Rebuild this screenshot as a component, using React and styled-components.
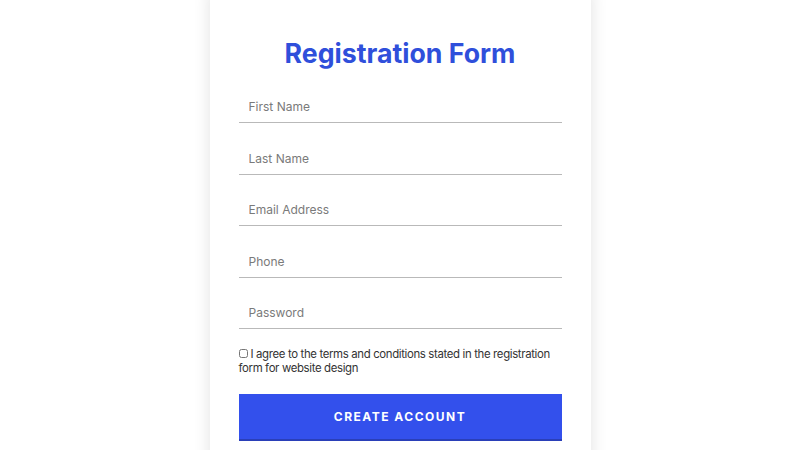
import React, { useState } from 'react';
import styled, { createGlobalStyle } from 'styled-components';

const GlobalStyle = createGlobalStyle`
  html, body {
    margin: 0;
    padding: 0;
    background: #fff;
    font-family: Inter, 'Noto Sans', sans-serif;
  }
  * {
    box-sizing: border-box;
  }
`;

const Page = styled.div`
  display: flex;
  justify-content: center;
  height: 450px;
  overflow: hidden;
`;

const Card = styled.form`
  width: 381px;
  height: 480px;
  margin-top: -9px;
  padding: 40px 29px 0;
  background: #fff;
  box-shadow: 0 0 16px rgba(0, 0, 0, 0.12);
  display: flex;
  flex-direction: column;
`;

const Title = styled.h1`
  margin: 0 0 16px;
  line-height: 44px;
  font-size: 26.7px;
  font-weight: 700;
  text-align: center;
  color: #2f4fdb;
`;

const Fields = styled.div`
  display: flex;
  flex-direction: column;
  gap: 19.6px;
`;

const Input = styled.input`
  height: 32px;
  width: 100%;
  border: none;
  border-bottom: 1px solid #b9b9b9;
  padding: 0 10px;
  font-family: inherit;
  font-size: 12px;
  color: #333;
  outline: none;
  background: transparent;

  &::placeholder {
    color: #7a7a7a;
  }
`;

const Terms = styled.label`
  display: block;
  margin-top: 19px;
  font-size: 11.4px;
  line-height: 13.5px;
  letter-spacing: -0.35px;
  color: #333;

  input {
    width: 9px;
    height: 9px;
    margin: 0 3px 0 0;
    vertical-align: 0;
  }
`;

const Submit = styled.button`
  margin-top: 19px;
  height: 47px;
  width: 100%;
  border: none;
  border-bottom: 2px solid #2a3fb8;
  background: #3350ec;
  color: #fff;
  font-family: inherit;
  font-size: 12px;
  font-weight: 700;
  letter-spacing: 1.5px;
  cursor: pointer;
`;

const fields = [
  { name: 'first', type: 'text', label: 'First Name' },
  { name: 'last', type: 'text', label: 'Last Name' },
  { name: 'email', type: 'email', label: 'Email Address' },
  { name: 'phone', type: 'tel', label: 'Phone' },
  { name: 'password', type: 'password', label: 'Password' },
];

export default function App() {
  const [agreed, setAgreed] = useState(false);

  return (
    <Page>
      <GlobalStyle />
      <Card onSubmit={(e) => e.preventDefault()}>
        <Title>Registration Form</Title>
        <Fields>
          {fields.map((f) => (
            <Input key={f.name} name={f.name} type={f.type} placeholder={f.label} />
          ))}
        </Fields>
        <Terms>
          <input type="checkbox" checked={agreed} onChange={(e) => setAgreed(e.target.checked)} />
          I agree to the terms and conditions stated in the registration form for website design
        </Terms>
        <Submit type="submit">CREATE ACCOUNT</Submit>
      </Card>
    </Page>
  );
}
